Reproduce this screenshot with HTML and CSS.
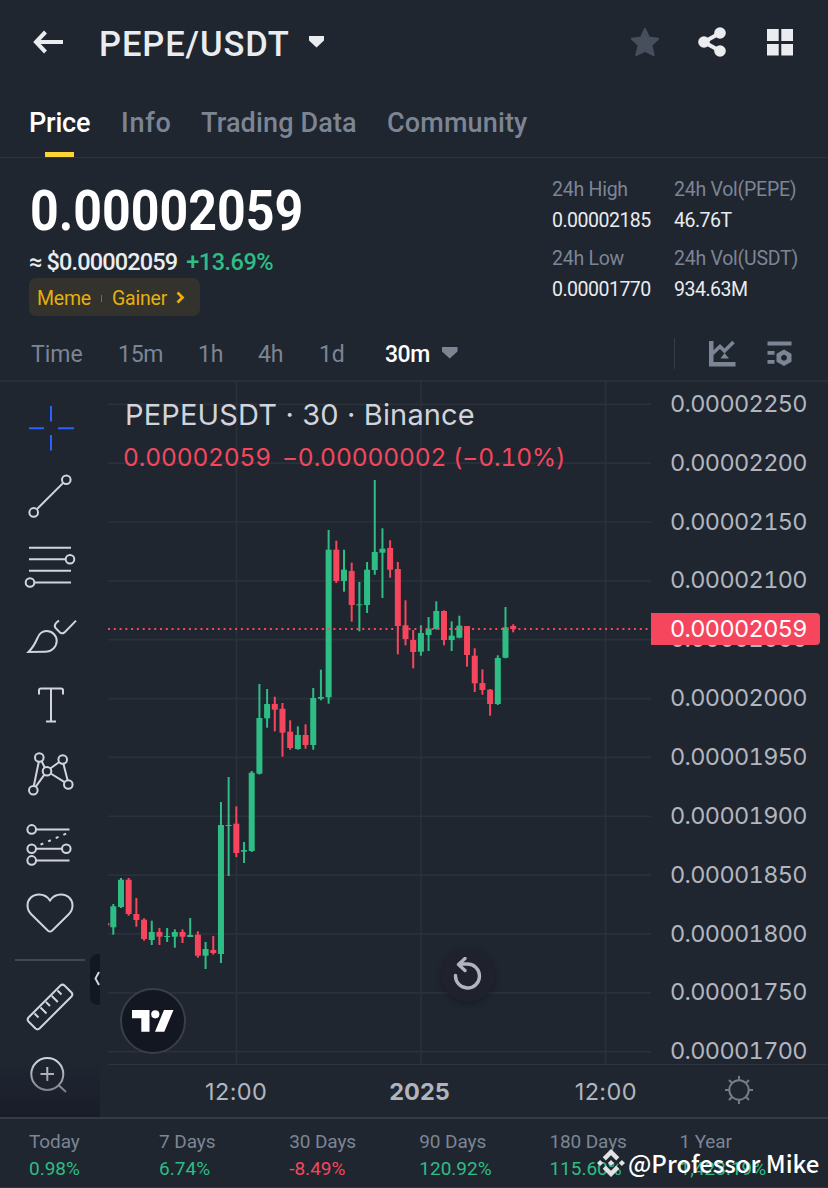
FILE: index.html
```html
<!DOCTYPE html>
<html lang="en">
<head>
    <meta charset="UTF-8">
    <meta name="viewport" content="width=device-width, initial-scale=1.0">
    <title>PEPE/USDT</title>
    <link rel="stylesheet" href="styles.css">
</head>
<body>
    <header class="topbar">
        <svg class="back" width="30" height="24" viewBox="0 0 30 24"><path d="M12.5 2 3 12l9.500 10M3 12h27" fill="none" stroke="currentColor" stroke-width="4"/></svg>
        <h1>PEPE/USDT</h1>
        <svg class="caret" width="16" height="12" viewBox="0 0 16 12"><path d="M0 0h15v4.500L7.500 11.500 0 4.500z" fill="currentColor"/></svg>
        <div class="actions">
            <svg width="30" height="30" viewBox="0 0 30 30"><path class="star" d="M15 2l4 8.500 9.200 1.200-6.800 6.400 2.300 10L15 23.800 6.300 28.100l2.300-10L1.800 11.700 11 10.500z"/></svg>
            <svg width="30" height="30" viewBox="0 0 30 30"><path d="M23 6 7 15l16 9" fill="none" stroke="currentColor" stroke-width="4"/><g fill="currentColor"><circle cx="23" cy="6" r="5.800"/><circle cx="7" cy="15" r="5.800"/><circle cx="23" cy="24" r="5.800"/></g></svg>
            <svg width="26" height="27" viewBox="0 0 26 27"><path d="M0 0h11.700v12H0zM14.300 0H26v12H14.300zM0 15h11.700v11.500H0zM14.300 15H26v11.500H14.300z" fill="currentColor"/></svg>
        </div>
    </header>

    <nav class="tabs">
        <a class="tab active t-price">Price</a>
        <a class="tab t-info">Info</a>
        <a class="tab t-data">Trading Data</a>
        <a class="tab t-comm">Community</a>
    </nav>

    <section class="summary">
        <div class="price-box">
            <div class="price">0.00002059</div>
            <div class="fiat"><span>≈ $0.00002059</span><span class="up">+13.69%</span></div>
            <div class="tags">
                <span>Meme</span><i></i><span>Gainer</span>
                <svg width="9" height="13" viewBox="0 0 9 13"><path d="M1.500 1.500 6.500 6.500l-5 5" fill="none" stroke="currentColor" stroke-width="2.800"/></svg>
            </div>
        </div>
        <dl class="stats">
            <div><dt>24h High</dt><dd>0.00002185</dd></div>
            <div><dt>24h Vol(PEPE)</dt><dd>46.76T</dd></div>
            <div><dt>24h Low</dt><dd>0.00001770</dd></div>
            <div><dt>24h Vol(USDT)</dt><dd>934.63M</dd></div>
        </dl>
    </section>

    <div class="intervals">
        <span class="i-time">Time</span>
        <span class="i-15">15m</span>
        <span class="i-1h">1h</span>
        <span class="i-4h">4h</span>
        <span class="i-1d">1d</span>
        <span class="active">30m</span>
        <svg class="caret" width="16" height="12" viewBox="0 0 16 12"><path d="M0 0h15.500v4.500L7.700 11.500 0 4.500z" fill="currentColor"/></svg>
        <div class="chart-actions">
            <svg width="27" height="27" viewBox="0 0 27 27"><path d="M0 1h4.500v21H26.500v4.500H0z" fill="currentColor"/><path d="M3 14l8-7.500 4.500 4.500 9-9" fill="none" stroke="currentColor" stroke-width="3.600"/><path d="M15.500 13l4.500 5.500h-8.500z" fill="currentColor"/></svg>
            <svg width="25" height="25" viewBox="0 0 25 25"><path fill="currentColor" d="M.500.500h24v4H.500zM.500 10h7v3.700h-7zM.500 19h7v3.700h-7z"/><path fill="currentColor" fill-rule="evenodd" d="M17 8.500l7.500 4.300v8L17 25l-7.500-4.200v-8zM17 13.800a3 3 0 1 0 .01 0z"/></svg>
        </div>
    </div>

    <main class="board">
        <aside class="tools">
            <div class="tool-list">
                <svg class="cross" viewBox="-28 -28 56 56"><path d="M1-22v15.500M1 7v15.500M-21 .200h15M8 .200h16"/></svg>
                <svg viewBox="-28 -28 56 56"><circle cx="16.300" cy="-17.200" r="4.300"/><circle cx="-16.300" cy="15.400" r="4.300"/><path d="M13.200-14.100-13.200 12.300"/></svg>
                <svg viewBox="-28 -28 56 56"><path d="M-21-19.300h42M-21-7.700h36.700M-21 3.700h42M-15.700 15.500H21"/><circle cx="20" cy="-7.700" r="4.300"/><circle cx="-20" cy="15.500" r="4.300"/></svg>
                <svg viewBox="-28 -28 56 56"><path d="M-21.500 16c5-5 7.500-10.500 9-14C-10.500-3-7-5-3.500-5 2.500-5 6.700-.500 6.700 5S2 15.700-5 15.700z"/><path d="M9-15.400l-3 2.500c-1.500 1.500-1.500 3.300-.5 4.800l4.500 4.500c1.500 1.300 3 1.200 4.500 0L26-15.400"/></svg>
                <svg viewBox="-28 -28 56 56"><path d="M-11-11.500v-4c0-1.300.7-2 2-2h20c1.300 0 2 .7 2 2v4M1-17.500v33M-4 15.500H6"/></svg>
                <svg viewBox="-28 -28 56 56"><g><circle cx="-10.700" cy="-17.500" r="4.300"/><circle cx="12.700" cy="-15.500" r="4.300"/><circle cx="-3" cy="-3.800" r="4.300"/><circle cx="18.300" cy="9.500" r="4.300"/><circle cx="-16.700" cy="15.200" r="4.300"/></g><path d="M-11.200-13.200-16.200 11M-8.300-13.800-5.300-7.500M.300-6.500l9-6.500M13.400-11.200l4.200 16.400M.700-1.500 14.600 7.200M-5.600-.300-14.200 11.700"/></svg>
                <svg viewBox="-28 -28 56 56"><circle cx="-18.300" cy="-15.600" r="4.300"/><circle cx="-18.300" cy="3.800" r="4.300"/><circle cx="16.300" cy="3.800" r="4.300"/><circle cx="-18.300" cy="15.400" r="4.300"/><path d="M-14-15.600h33.500M-14 3.800h26M-14 15.400h33.500"/><path d="M-9.500-.300 16.500-11.500" stroke-dasharray="3 5.300"/></svg>
                <svg viewBox="-28 -28 56 56"><path d="M0-13.500C-3-18-7-19.500-11-19.500c-7 0-11.500 5-11.500 11 0 4 1.500 6.500 4 9L-2 16.700q2 1.700 4 0L18.500.500c2.500-2.500 4-5 4-9 0-6-4.500-11-11.500-11-4 0-8 1.500-11 6z"/></svg>
            </div>
            <hr>
            <svg class="ruler" viewBox="-28 -28 56 56"><path d="M10.500-21.500q2-1.700 4 0l7 7q1.700 2 0 4l-32 32q-2 1.700-4 0l-7-7q-1.700-2 0-4zM7.500-16.500l4 4M1.800-11l6 6M-4-5l4 4M-9.500.500l6 6M-15.500 6.500l4 4"/></svg>
            <svg class="magnify" viewBox="-28 -28 56 56"><circle cx="-2.700" cy="-2" r="16"/><path d="M-9.500-2H4M-2.700-9v14M8.700 9.300 16 16"/></svg>
            <div class="fade"></div>
            <div class="collapse"><svg width="6" height="16" viewBox="0 0 6 16"><path d="M5 1 1.500 7.500 5 14"/></svg></div>
        </aside>

        <div class="plot">
            <svg id="chart" width="543" height="682" viewBox="108 382 543 682"></svg>
            <div class="legend">
                <div class="symbol">PEPEUSDT · 30 · Binance</div>
                <div class="change"><span>0.00002059</span><span>−0.00000002 (−0.10%)</span></div>
            </div>
            <div class="tv-logo"><svg width="42" height="22" viewBox="0 0 42 22"><path fill="#fff" d="M0 0h17.500v21.700H9.300V8.300H0zM32 0h9.500l-9.200 21.700H23z"/><circle cx="23.300" cy="4.300" r="4.100" fill="#fff"/></svg></div>
            <div class="reset"><svg width="30" height="36" viewBox="0 0 30 36"><path d="M2.500 18.500a12 12 0 1 0 12-11.500H6M12 1.500 5.500 7.500l6.500 6" fill="none" stroke="#b2b5be" stroke-width="3.400" stroke-linecap="round" stroke-linejoin="round"/></svg></div>
            <div class="times"><span>12:00</span><b>2025</b><span>12:00</span></div>
        </div>

        <div class="axis">
            <div class="labels">
                <span>0.00002250</span><span>0.00002200</span><span>0.00002150</span><span>0.00002100</span>
                <span>0.00002050</span><span>0.00002000</span><span>0.00001950</span><span>0.00001900</span>
                <span>0.00001850</span><span>0.00001800</span><span>0.00001750</span><span>0.00001700</span>
            </div>
            <div class="last">0.00002059</div>
            <div class="settings"><svg width="30" height="30" viewBox="-15 -15 30 30"><circle r="9.700"/><path d="M0-10v-4M0 10v4M-10 0h-4M10 0h4M-7-7l-3-3M7-7l3-3M-7 7l-3 3M7 7l3 3"/></svg></div>
        </div>
    </main>

    <footer class="periods">
        <div><span>Today</span><em class="up">0.98%</em></div>
        <div><span>7 Days</span><em class="up">6.74%</em></div>
        <div><span>30 Days</span><em class="down">-8.49%</em></div>
        <div><span>90 Days</span><em class="up">120.92%</em></div>
        <div><span>180 Days</span><em class="up">115.60%</em></div>
        <div><span>1 Year</span><em class="up">1,423.19%</em></div>
    </footer>

    <div class="watermark">
        <svg width="28" height="28" viewBox="0 0 28 28"><path fill="#e0e2e5" d="M14 0l8.300 8.300-3.100 3.100L14 6.200l-5.200 5.200-3.100-3.100zM3.100 10.900 6.200 14l-3.100 3.100L0 14zM14 10.900l3.100 3.100-3.100 3.100-3.100-3.100zM24.900 10.900 28 14l-3.100 3.100-3.100-3.100zM14 28l-8.300-8.300 3.100-3.100 5.200 5.200 5.200-5.200 3.100 3.100z"/></svg>
        <span>@Professor Mike</span>
    </div>

    <script>
        // side, high, body top, body bottom, low
        var candles = [
            ['g', 904, 906.3, 927.3, 934.7], ['g', 878, 879.7, 907, 908], ['r', 878, 879.7, 914, 915.7],
            ['r', 898, 914, 920, 926.7], ['r', 918.3, 919.7, 939, 940.7], ['g', 920.7, 932, 940, 945],
            ['r', 928, 932, 936.7, 945], ['g', 928, 936, 937, 942], ['g', 929.3, 932, 936.7, 947.7],
            ['r', 929.3, 932, 936.7, 943], ['g', 918, 935, 937, 937], ['r', 931.3, 934.7, 955.7, 957.7],
            ['g', 942, 949, 955.7, 969], ['r', 936, 950, 953, 954.7], ['g', 802, 825, 954, 963],
            ['g', 777, 825, 826, 876], ['r', 806.3, 823.7, 853, 857], ['g', 842, 850, 851.7, 863],
            ['g', 771, 772.7, 851, 852], ['g', 684, 718, 773.7, 774.5], ['g', 689, 704, 718.3, 727.7],
            ['r', 696.7, 704, 709.7, 731.3], ['r', 703, 708.7, 732.7, 756.7], ['r', 720.3, 731.7, 748, 749.7],
            ['g', 726.3, 735, 749, 749.7], ['r', 724.3, 735, 745, 748.7], ['g', 688, 698, 745, 749.7],
            ['g', 669.7, 697, 698.7, 700.3], ['g', 530, 549.7, 697.3, 703.7], ['r', 540.7, 549.7, 581, 583],
            ['g', 549.7, 569.7, 581, 591.7], ['r', 562.7, 571, 605, 621.7], ['g', 582, 604.3, 605.3, 631.3],
            ['g', 562, 569.7, 605, 613], ['g', 480, 552, 570, 574.7], ['g', 528.3, 548.7, 552.7, 598],
            ['r', 540.3, 548, 569.7, 577.7], ['r', 562, 569, 626, 654.3], ['r', 600.3, 625.3, 639, 645.3],
            ['r', 630, 640, 652, 668.3], ['g', 625.3, 633, 651.7, 655.7], ['g', 617, 628.7, 635, 651],
            ['g', 601.3, 611, 629, 629.7], ['r', 610.3, 611, 640, 645.3], ['g', 621.3, 635.7, 640, 651],
            ['g', 615.7, 625.7, 637.7, 638.3], ['r', 626, 626, 655, 666.7], ['r', 648.3, 655.7, 683.3, 692],
            ['r', 669.3, 683, 690, 694.7], ['r', 689, 689.7, 704, 715.7], ['g', 655.3, 658, 704, 705],
            ['g', 607, 627.3, 657.7, 658.3], ['r', 624.3, 626, 629, 632.3]
        ];
        var out = '';
        for (var i = 0; i < 12; i++) {
            out += '<path class="grid" d="M108 ' + (404.3 + i * 58.85) + 'h543"/>';
        }
        [236.5, 421, 605.5].forEach(function(x) {
            out += '<path class="grid" d="M' + x + ' 381v683"/>';
        });
        out += '<rect class="r" x="108" y="923" width="1.3" height="2.5"/>';
        candles.forEach(function(c, n) {
            var x = 113.3 + n * 7.69;
            out += '<rect class="' + c[0] + '" x="' + (x - 1) + '" y="' + c[1] + '" width="2" height="' + (c[4] - c[1]) + '"/>';
            out += '<rect class="' + c[0] + '" x="' + (x - 3) + '" y="' + c[2] + '" width="6" height="' + (c[3] - c[2]) + '"/>';
        });
        out += '<path class="last-line" d="M108 629h543"/>';
        document.getElementById('chart').innerHTML = out;
    </script>
</body>
</html>
```
FILE: styles.css
```css
* {
    box-sizing: border-box;
}

body {
    margin: 0;
    width: 828px;
    height: 1188px;
    position: relative;
    overflow: hidden;
    background: #1f2630;
    color: #eaecef;
    font-family: Roboto, "Noto Sans", sans-serif;
}

svg {
    display: block;
    flex: none;
}

.up { color: #2ebd85; }
.down { color: #f6465d; }

.topbar {
    display: flex;
    align-items: center;
    height: 84px;
    padding: 0 35px 0 33px;
}

.topbar h1 {
    margin: 3px 0 0 36px;
    width: 190px;
    font-size: 34.5px;
    font-weight: 500;
    letter-spacing: 0.9px;
    white-space: nowrap;
}

.topbar .caret {
    margin-left: 20px;
}

.actions {
    display: flex;
    align-items: center;
    gap: 38px;
    margin-left: auto;
}

.actions svg:last-child {
    margin-left: 2px;
}

.actions svg:first-child {
    margin-right: -1px;
}

.star {
    fill: #474f5c;
    stroke: #474f5c;
    stroke-width: 2;
    stroke-linejoin: round;
}

.tabs {
    display: flex;
    gap: 30px;
    height: 74px;
    padding: 23px 30px 0 29px;
    border-bottom: 1px solid #2d343f;
}

.tab {
    position: relative;
    font-size: 27px;
    line-height: 33px;
    font-weight: 500;
    color: #7c8594;
    white-space: nowrap;
}

.tab.active {
    color: #fff;
}

.tab.active::after {
    content: "";
    position: absolute;
    left: 16px;
    bottom: 0;
    width: 29px;
    height: 5px;
    background: #fcd535;
}

.t-price { width: 62px; letter-spacing: -0.2px; }
.t-info { width: 50px; letter-spacing: 0.8px; }
.t-data { width: 156px; letter-spacing: 0.15px; }
.t-comm { width: 141px; letter-spacing: 0.15px; }

.summary {
    display: flex;
    justify-content: space-between;
    height: 167px;
    padding: 0 28px 0 29px;
}

.price {
    margin: 21px 0 0 1px;
    height: 64px;
    font-size: 56px;
    line-height: 64px;
    font-weight: 700;
    color: #fff;
    transform: scaleX(0.895);
    transform-origin: left;
}

.fiat {
    display: flex;
    gap: 9px;
    margin-top: 4px;
    font-size: 23.5px;
    line-height: 30px;
    font-weight: 500;
    letter-spacing: -0.85px;
}

.fiat .up {
    letter-spacing: -0.5px;
}

.tags {
    display: flex;
    align-items: center;
    width: 171px;
    height: 38px;
    margin-top: 1px;
    padding: 2px 8px 0;
    border-radius: 7px;
    background: #34322c;
    color: #e5b00f;
    font-size: 19.5px;
    letter-spacing: -0.2px;
}

.tags i {
    width: 1px;
    height: 7px;
    margin: 0 10px;
    background: #8a6d1c;
}

.tags svg {
    margin: 0 0 2px 9px;
}

.stats {
    display: grid;
    grid-template-columns: 122px 126px;
    grid-auto-rows: 69px;
    margin: 19px 0 0;
    font-size: 19.5px;
    white-space: nowrap;
}

.stats dt {
    height: 31px;
    line-height: 26px;
    letter-spacing: -0.25px;
    color: #7c8594;
}

.stats dd {
    margin: 0;
    line-height: 26px;
    letter-spacing: -0.5px;
}

.intervals {
    display: flex;
    align-items: center;
    height: 57px;
    padding: 3px 36px 0 31px;
    border-bottom: 2px solid #292f3a;
    color: #7c8594;
    font-size: 23px;
}

.intervals .i-time { width: 87px; }
.intervals .i-15 { width: 80px; letter-spacing: -0.3px; }
.intervals .i-1h { width: 60px; letter-spacing: -0.3px; }
.intervals .i-4h { width: 61px; letter-spacing: -0.3px; }
.intervals .i-1d { width: 66px; letter-spacing: -0.3px; }

.intervals .active {
    width: 57px;
    color: #fff;
    font-weight: 500;
    letter-spacing: -0.5px;
}

.intervals .caret {
    margin-bottom: 2px;
}

.chart-actions {
    display: flex;
    align-items: center;
    gap: 31px;
    height: 31px;
    margin: 0 0 2px auto;
    padding-left: 34px;
    border-left: 1px solid #353c47;
}

.board {
    display: flex;
    height: 735px;
}

.tools {
    position: relative;
    width: 108px;
    padding: 11px 8px 0 0;
}

.tools svg {
    fill: none;
    stroke: #d1d4dc;
    stroke-width: 2;
}

.tool-list svg,
.tools > svg {
    width: 56px;
    height: 56px;
    margin: 0 auto;
}

.tool-list {
    display: grid;
    grid-auto-rows: 69.5px;
    align-items: center;
}

.tools .cross {
    stroke: #2962ff;
}

.tools hr {
    width: 70px;
    height: 2px;
    margin: 10px auto 0 15px;
    border: 0;
    background: #434651;
}

.tools > .ruler {
    margin-top: 18px;
}

.tools > .magnify {
    margin-top: 13px;
}

.fade {
    position: absolute;
    left: 0;
    bottom: 0;
    width: 100px;
    height: 56px;
    background: linear-gradient(rgba(24, 27, 40, 0), rgba(24, 27, 40, 0.85));
}

.collapse {
    position: absolute;
    left: 90px;
    top: 572px;
    width: 10px;
    height: 51px;
    padding: 17px 0 0 4px;
    border-radius: 8px 0 0 8px;
    background: #131722;
}

.plot {
    position: relative;
    width: 543px;
}

.grid {
    stroke: #2b313b;
    stroke-width: 1.700;
}

.g { fill: #2ebd85; }
.r { fill: #f6465d; }

.last-line {
    stroke: #f6465d;
    stroke-width: 2;
    stroke-dasharray: 2 3.780;
}

.legend {
    position: absolute;
    left: 16px;
    top: 13px;
    font-family: Inter, "Liberation Sans", sans-serif;
    white-space: nowrap;
}

.symbol {
    padding-left: 1px;
    font-size: 29px;
    line-height: 40px;
    letter-spacing: 0.15px;
    color: #d1d4dc;
}

.change {
    display: flex;
    gap: 11px;
    margin: 6px 0 0 -1px;
    font-size: 24.5px;
    line-height: 32px;
    letter-spacing: -0.15px;
    color: #f6465d;
    font-variant-numeric: tabular-nums;
}

.change span:last-child {
    letter-spacing: -0.1px;
}

.tv-logo {
    position: absolute;
    left: 12px;
    top: 606px;
    width: 66px;
    height: 66px;
    display: grid;
    place-items: center;
    border: 2px solid #3a3e49;
    border-radius: 50%;
    background: #131722;
}

.reset {
    position: absolute;
    left: 333px;
    top: 566px;
    width: 54px;
    height: 54px;
    display: grid;
    place-items: center;
    border-radius: 50%;
    background: #1f222d;
    box-shadow: 0 2px 5px rgba(16, 18, 28, 0.5);
}

.times {
    display: flex;
    justify-content: space-between;
    height: 53px;
    padding: 0 14px 0 97px;
    border-top: 1px solid #30343f;
    font-family: Inter, "Liberation Sans", sans-serif;
    font-size: 23.5px;
    line-height: 54px;
    color: #b2b5be;
}

.times span {
    letter-spacing: 0.4px;
}

.times b {
    margin-right: 3px;
}

.axis {
    position: relative;
    width: 177px;
    font-family: Inter, "Liberation Sans", sans-serif;
    font-size: 23.5px;
    letter-spacing: -0.65px;
    font-variant-numeric: tabular-nums;
    color: #b2b5be;
}

.labels {
    display: grid;
    grid-auto-rows: 58.85px;
    align-items: center;
    height: 683px;
    margin-top: -8px;
    padding-left: 19px;
}

.last {
    position: absolute;
    left: 0;
    top: 231px;
    width: 169px;
    height: 32px;
    padding-left: 19px;
    line-height: 32px;
    border-radius: 0 4px 4px 0;
    background: #f6465d;
    color: #fff;
}

.settings {
    display: grid;
    place-items: center;
    height: 51px;
    margin-top: 7px;
    padding-right: 1px;
    border-top: 1px solid #30343f;
}

.settings svg {
    fill: none;
    stroke: #787b86;
    stroke-width: 2;
}

.periods {
    display: grid;
    grid-template-columns: repeat(6, 130.1px);
    height: 71px;
    padding: 10px 0 0 29px;
    border-top: 2px solid #343a46;
    border-bottom: 1px solid #2d343f;
    font-size: 19px;
}

.periods span {
    display: block;
    height: 27px;
    line-height: 25px;
    letter-spacing: -0.1px;
    color: #7c8594;
}

.periods em {
    font-style: normal;
    line-height: 25px;
}

.watermark {
    position: absolute;
    left: 597px;
    top: 1147px;
    display: flex;
    align-items: center;
    gap: 3px;
    height: 32px;
    font-family: "Noto Sans CJK SC", "Noto Sans", sans-serif;
    font-size: 24px;
    font-weight: 500;
    color: #fff;
    white-space: nowrap;
}

.watermark span {
    margin-top: -2px;
}
```
